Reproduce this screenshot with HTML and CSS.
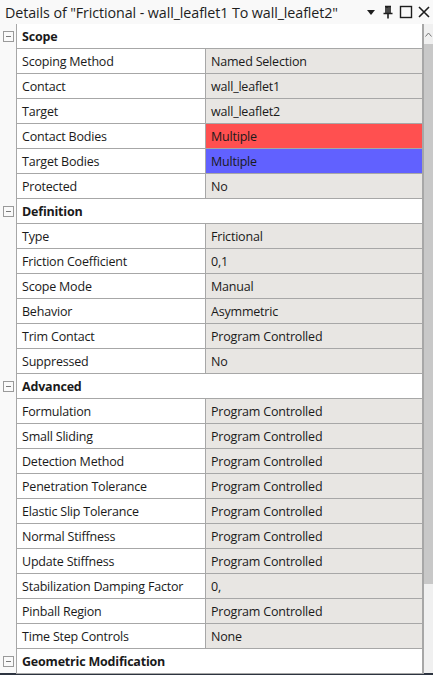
FILE: index.html
```html
<!DOCTYPE html>
<html>
<head>
<meta charset="utf-8">
<link rel="stylesheet" href="styles.css">
</head>
<body>
<div class="panel">
  <div class="titlebar">
    <span class="title">Details of "Frictional - wall_leaflet1 To wall_leaflet2"</span>
    <span class="grip"></span>
    <span class="tbtn"><svg width="10" height="10" viewBox="0 0 10 10"><path d="M1 3 L9 3 L5 8 Z" fill="#1e1e1e"/></svg></span>
    <span class="tbtn"><svg width="12" height="14" viewBox="0 0 12 14"><path d="M3 1.5 H9 M4 1.5 V8 M8 1.5 V8 M4 2 H6 V8 M1.5 8.5 H10.5 M6 8.5 V13.5" stroke="#1e1e1e" stroke-width="1.6" fill="none"/></svg></span>
    <span class="tbtn"><svg width="14" height="14" viewBox="0 0 14 14"><rect x="1.5" y="1.5" width="11" height="11" stroke="#1e1e1e" stroke-width="1.4" fill="none"/></svg></span>
    <span class="tbtn"><svg width="12" height="12" viewBox="0 0 12 12"><path d="M1 1 L11 11 M11 1 L1 11" stroke="#1e1e1e" stroke-width="1.6"/></svg></span>
  </div>
  <div class="body">
    <div class="grid">
      <div class="gut"><span class="tog"></span></div><div class="hdr">Scope</div>
      <div class="gut"></div><div class="lbl">Scoping Method</div><div class="val">Named Selection</div>
      <div class="gut"></div><div class="lbl">Contact</div><div class="val">wall_leaflet1</div>
      <div class="gut"></div><div class="lbl">Target</div><div class="val">wall_leaflet2</div>
      <div class="gut"></div><div class="lbl">Contact Bodies</div><div class="val red">Multiple</div>
      <div class="gut"></div><div class="lbl">Target Bodies</div><div class="val blue">Multiple</div>
      <div class="gut"></div><div class="lbl">Protected</div><div class="val">No</div>

      <div class="gut"><span class="tog"></span></div><div class="hdr">Definition</div>
      <div class="gut"></div><div class="lbl">Type</div><div class="val">Frictional</div>
      <div class="gut"></div><div class="lbl">Friction Coefficient</div><div class="val">0,1</div>
      <div class="gut"></div><div class="lbl">Scope Mode</div><div class="val">Manual</div>
      <div class="gut"></div><div class="lbl">Behavior</div><div class="val">Asymmetric</div>
      <div class="gut"></div><div class="lbl">Trim Contact</div><div class="val">Program Controlled</div>
      <div class="gut"></div><div class="lbl">Suppressed</div><div class="val">No</div>

      <div class="gut"><span class="tog"></span></div><div class="hdr">Advanced</div>
      <div class="gut"></div><div class="lbl">Formulation</div><div class="val">Program Controlled</div>
      <div class="gut"></div><div class="lbl">Small Sliding</div><div class="val">Program Controlled</div>
      <div class="gut"></div><div class="lbl">Detection Method</div><div class="val">Program Controlled</div>
      <div class="gut"></div><div class="lbl">Penetration Tolerance</div><div class="val">Program Controlled</div>
      <div class="gut"></div><div class="lbl">Elastic Slip Tolerance</div><div class="val">Program Controlled</div>
      <div class="gut"></div><div class="lbl">Normal Stiffness</div><div class="val">Program Controlled</div>
      <div class="gut"></div><div class="lbl">Update Stiffness</div><div class="val">Program Controlled</div>
      <div class="gut"></div><div class="lbl">Stabilization Damping Factor</div><div class="val">0,</div>
      <div class="gut"></div><div class="lbl">Pinball Region</div><div class="val">Program Controlled</div>
      <div class="gut"></div><div class="lbl">Time Step Controls</div><div class="val">None</div>

      <div class="gut"><span class="tog"></span></div><div class="hdr">Geometric Modification</div>
    </div>
    <div class="scroll">
      <div class="arrow"><svg width="7" height="5" viewBox="0 0 7 5"><path d="M0.5 4.5 L3.5 1 L6.5 4.5" stroke="#777" fill="none"/></svg></div>
      <div class="thumb"></div>
    </div>
  </div>
</div>
</body>
</html>
```
FILE: styles.css
```css
html, body {
  margin: 0;
  padding: 0;
  background: #f9f9f9;
}
body {
  width: 433px;
  height: 675px;
  overflow: hidden;
  font-family: "Open Sans", "Noto Sans", sans-serif;
  color: #1a1a1a;
}
.panel {
  display: flex;
  flex-direction: column;
  height: 675px;
  border-bottom: 2px solid #2d3440;
  box-sizing: border-box;
}
.titlebar {
  height: 24px;
  display: flex;
  align-items: center;
  padding-left: 5px;
  font-size: 14.3px;
  color: #1e1e1e;
  box-sizing: border-box;
}
.title {
  white-space: nowrap;
  letter-spacing: -0.1px;
}
.grip {
  width: 20px;
  height: 5px;
  margin-left: 5px;
  background-image: radial-gradient(#cfcfcf 0.6px, transparent 0.7px);
  background-size: 2px 2px;
}
.tbtn {
  width: 19px;
  display: flex;
  justify-content: center;
  align-items: center;
}
.body {
  display: flex;
  flex: 1;
  min-height: 0;
}
.grid {
  width: 424px;
  display: grid;
  grid-template-columns: 16px 189px 219px;
  grid-auto-rows: 25px;
  align-content: start;
  font-size: 12.5px;
  letter-spacing: -0.2px;
}
.gut {
  display: flex;
  align-items: center;
  justify-content: center;
}
.tog {
  width: 9px;
  height: 9px;
  border: 1px solid #9a9a9a;
  background: #fafafa;
  position: relative;
}
.tog::after {
  content: "";
  position: absolute;
  left: 2px;
  right: 2px;
  top: 4px;
  height: 1px;
  background: #7a7a7a;
}
.hdr, .lbl, .val {
  display: flex;
  align-items: center;
  box-sizing: border-box;
  border-bottom: 1px solid #a7a7a7;
  white-space: nowrap;
}
.hdr {
  grid-column: 2 / 4;
  background: #ffffff;
  font-weight: 700;
  padding-left: 5px;
  border-left: 1px solid #a7a7a7;
  border-right: 2px solid #a7a7a7;
}
.lbl {
  background: #ffffff;
  padding-left: 5px;
  border-left: 1px solid #a7a7a7;
}
.val {
  background: #e8e6e3;
  padding-left: 5px;
  border-left: 1px solid #a7a7a7;
  border-right: 2px solid #a7a7a7;
}
.val.red { background: #ff5050; }
.val.blue { background: #6161ff; }
.scroll {
  width: 9px;
  background: #f0f0f0;
  display: flex;
  flex-direction: column;
}
.arrow {
  height: 20px;
  display: flex;
  justify-content: center;
  align-items: center;
}
.thumb {
  height: 540px;
  background: #c8c8c8;
}
```
